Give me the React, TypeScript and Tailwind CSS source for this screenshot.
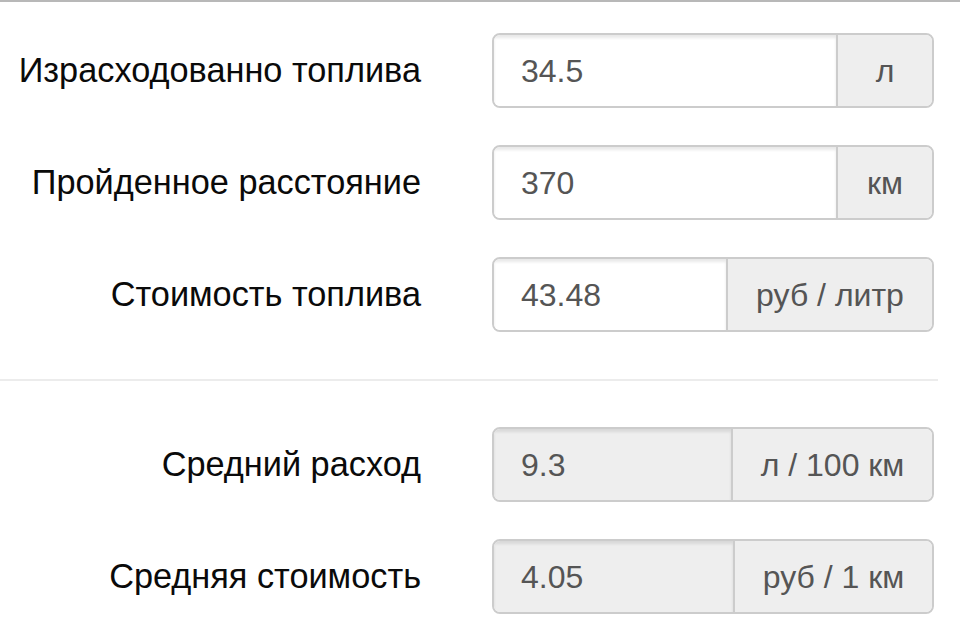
import React from "react";

type Row = { label: string; value: string; unit: string; addonW: string; readOnly?: boolean };

const top: Row[] = [
  { label: "Израсходованно топлива", value: "34.5", unit: "л", addonW: "w-[96px]" },
  { label: "Пройденное расстояние", value: "370", unit: "км", addonW: "w-[96px]" },
  { label: "Стоимость топлива", value: "43.48", unit: "руб / литр", addonW: "w-[206px]" },
];
const bottom: Row[] = [
  { label: "Средний расход", value: "9.3", unit: "л / 100 км", addonW: "w-[201px]", readOnly: true },
  { label: "Средняя стоимость", value: "4.05", unit: "руб / 1 км", addonW: "w-[199px]", readOnly: true },
];

function FormRow({ r }: { r: Row }) {
  return (
    <div className="flex items-center h-[75px]">
      <div className="w-[421px] text-right text-[34.3px] text-[#0a0a0a] leading-none whitespace-nowrap">{r.label}</div>
      <div className="ml-[71px] w-[442px] h-[75px] flex rounded-[8px] border-2 border-[#cccccc] overflow-hidden">
        <div
          className={
            "flex-1 flex items-center pl-[27px] text-[32px] text-[#555] shadow-[inset_0_3px_3px_rgba(0,0,0,0.09)] " +
            (r.readOnly ? "bg-[#eeeeee]" : "bg-white")
          }
        >
          {r.value}
        </div>
        <div
          className={
            r.addonW +
            " flex items-center justify-center border-l-2 border-[#cccccc] bg-[#eeeeee] text-[32px] text-[#555] whitespace-nowrap"
          }
        >
          {r.unit}
        </div>
      </div>
    </div>
  );
}

export default function App() {
  return (
    <div
      className="w-[960px] h-[640px] bg-white overflow-hidden border-t-2 border-[#b8b8b8]"
      style={{ fontFamily: '"Liberation Sans", Arial, sans-serif' }}
    >
      <div className="pt-[31px] flex flex-col gap-[37px]">
        {top.map((r) => (
          <FormRow key={r.label} r={r} />
        ))}
      </div>
      <div className="mt-[47px] w-[938px] h-[2px] bg-[#ececec]" />
      <div className="mt-[46px] flex flex-col gap-[37px]">
        {bottom.map((r) => (
          <FormRow key={r.label} r={r} />
        ))}
      </div>
    </div>
  );
}
